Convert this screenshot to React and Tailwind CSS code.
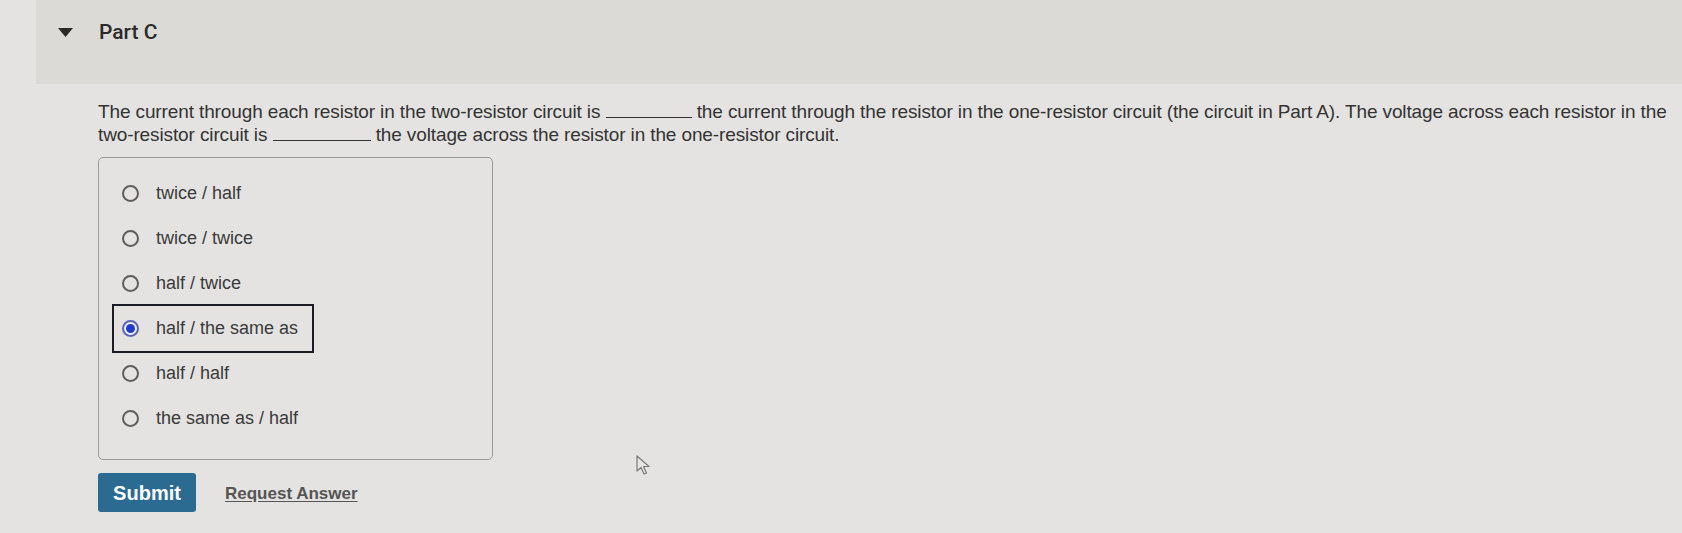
import React from "react";

const options = [
  "twice / half",
  "twice / twice",
  "half / twice",
  "half / the same as",
  "half / half",
  "the same as / half",
];

function Radio({ checked }) {
  if (checked) {
    return (
      <span className="flex size-[17px] shrink-0 items-center justify-center rounded-full border-[2px] border-[#5b64b4] bg-[#eef0f8]">
        <span className="size-[9px] rounded-full bg-[#1f3acc]" />
      </span>
    );
  }
  return <span className="size-[17px] shrink-0 rounded-full border-[2px] border-[#5e5e5e]" />;
}

export default function App() {
  const selected = 3;
  return (
    <div className="relative min-h-screen bg-[#e4e3e1] font-['Liberation_Sans',Arial,sans-serif] text-[#333]">
      {/* header */}
      <div className="ml-[36px] flex h-[84px] items-start bg-[#dbdad7] pl-[22px] pt-[21px]">
        <svg width="15" height="9" viewBox="0 0 15 9" className="mt-[7px]">
          <path d="M0 0 H15 L7.5 9 Z" fill="#2a2a2a" />
        </svg>
        <span className="ml-[26px] font-['Roboto',Arial,sans-serif] text-[21px] font-medium leading-[22px] text-[#2a2a2a]">
          Part C
        </span>
      </div>

      {/* body */}
      <div className="pl-[98px] pr-[8px] pt-[16px]">
        <p className="text-[19px] leading-[23px] tracking-[-0.12px] text-[#333]">
          The current through each resistor in the two-resistor circuit is{" "}
          <span className="inline-block h-[18px] w-[86px] border-b border-[#333] align-baseline" /> the current
          through the resistor in the one-resistor circuit (the circuit in Part A). The voltage across
          each resistor in the two-resistor circuit is{" "}
          <span className="inline-block h-[18px] w-[98px] border-b border-[#333] align-baseline" /> the voltage
          across the resistor in the one-resistor circuit.
        </p>

        <div className="mt-[11px] flex w-[395px] flex-col items-start rounded-[5px] border border-[#9a9a9a] pb-[18px] pl-[15px] pt-[13px]">
          {options.map((o, i) => (
            <label
              key={o}
              className={
                "flex h-[45px] w-fit items-center gap-[17px] pl-[8px] pr-[14px] text-[18px] text-[#3a3a3a] " +
                (i === selected ? "outline-2 outline-[#1c1c24]" : "")
              }
            >
              <Radio checked={i === selected} />
              <span>{o}</span>
            </label>
          ))}
        </div>

        <div className="mt-[13px] flex items-center gap-[29px]">
          <button className="h-[39px] w-[98px] rounded-[3px] bg-[#2b6b92] text-[20px] font-bold text-white">
            Submit
          </button>
          <a className="mb-[-2px] text-[17px] font-bold text-[#555] underline underline-offset-2">
            Request Answer
          </a>
        </div>
      </div>

      {/* mouse pointer */}
      <svg
        width="16"
        height="22"
        viewBox="0 0 16 22"
        className="absolute left-[636px] top-[455px]"
      >
        <path
          d="M1 1 L1 16 L5 12.5 L8 19 L10.5 18 L7.5 11.5 L13 11.5 Z"
          fill="#e6e5e3"
          stroke="#7a7a7a"
          strokeWidth="1.2"
          strokeLinejoin="round"
        />
      </svg>
    </div>
  );
}
